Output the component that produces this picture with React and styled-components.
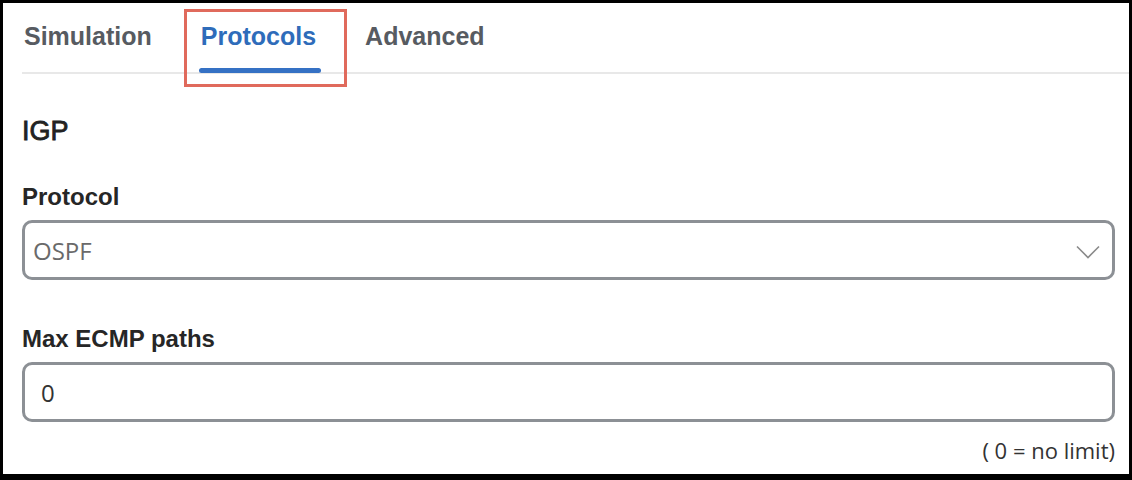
import React from 'react';
import styled, { createGlobalStyle } from 'styled-components';

const GlobalStyle = createGlobalStyle`
  html, body {
    margin: 0;
    padding: 0;
    background: #ffffff;
  }
  * {
    box-sizing: border-box;
  }
`;

const tabs = ['Simulation', 'Protocols', 'Advanced'];

function App() {
  return (
    <>
      <GlobalStyle />
      <Frame>
        <TabBar>
          {tabs.map((tab) => (
            <Tab key={tab} active={tab === 'Protocols'}>
              {tab}
              {tab === 'Protocols' && <Highlight />}
            </Tab>
          ))}
        </TabBar>
        <Content>
          <SectionTitle>IGP</SectionTitle>
          <Field>
            <Label htmlFor="igp-protocol">Protocol</Label>
            <SelectWrap>
              <Select id="igp-protocol" defaultValue="OSPF">
                <option value="OSPF">OSPF</option>
                <option value="ISIS">IS-IS</option>
              </Select>
              <Chevron viewBox="0 0 24 14" aria-hidden="true">
                <path d="M1 1.5 L12 12.5 L23 1.5" />
              </Chevron>
            </SelectWrap>
          </Field>
          <Field spaced>
            <Label htmlFor="ecmp">Max ECMP paths</Label>
            <Input id="ecmp" defaultValue="0" />
            <Hint>( 0 = no limit)</Hint>
          </Field>
        </Content>
      </Frame>
    </>
  );
}

const Frame = styled.div`
  width: 1132px;
  height: 480px;
  border: 3px solid #000;
  border-bottom-width: 6px;
  background: #fff;
  font-family: 'Liberation Sans', Arial, sans-serif;
  color: #222;
  overflow: hidden;
`;

const TabBar = styled.nav`
  display: flex;
  gap: 45px;
  margin-left: 19px;
  border-bottom: 2px solid #e8e8e8;
`;

const Tab = styled.div`
  position: relative;
  padding: 18px 2px 21px;
  font-size: 25px;
  line-height: 30px;
  font-weight: 700;
  color: ${(p) => (p.active ? '#2e6cba' : '#575b61')};

  &::after {
    content: '';
    display: ${(p) => (p.active ? 'block' : 'none')};
    position: absolute;
    left: 0;
    right: -3px;
    bottom: -1px;
    height: 5px;
    border-radius: 3px;
    background: #3571c4;
  }
`;

const Highlight = styled.span`
  position: absolute;
  left: -15px;
  top: 6px;
  width: 163px;
  height: 78px;
  border: 3px solid #e06a5c;
  pointer-events: none;
`;

const Content = styled.div`
  padding: 41px 14px 0 19px;
`;

const SectionTitle = styled.h2`
  margin: 0 0 36px;
  font-size: 27px;
  line-height: 32px;
  font-weight: 400;
  -webkit-text-stroke: 0.8px #222;
  color: #222;
`;

const Field = styled.div`
  display: flex;
  flex-direction: column;
  margin-top: ${(p) => (p.spaced ? '45px' : '0')};
`;

const Label = styled.label`
  margin-bottom: 9px;
  font-size: 24px;
  line-height: 28px;
  font-weight: 700;
  color: #262626;
`;

const SelectWrap = styled.div`
  position: relative;
`;

const fieldBox = `
  width: 100%;
  height: 60px;
  border: 3px solid #8c9095;
  border-radius: 10px;
  background: #fff;
  font-family: 'Open Sans', sans-serif;
  font-size: 24px;
  outline: none;
`;

const Select = styled.select`
  ${fieldBox}
  appearance: none;
  padding: 0 50px 0 8px;
  color: #6a6a6a;
`;

const Chevron = styled.svg`
  position: absolute;
  right: 15px;
  top: 25px;
  width: 24px;
  height: 14px;
  fill: none;
  stroke: #8a8a8a;
  stroke-width: 1.6;
  pointer-events: none;
`;

const Input = styled.input`
  ${fieldBox}
  padding: 0 16px;
  color: #333;
`;

const Hint = styled.div`
  align-self: flex-end;
  margin-top: 15px;
  font-family: 'Open Sans', sans-serif;
  font-size: 22px;
  line-height: 26px;
  color: #333;
`;

export default App;
